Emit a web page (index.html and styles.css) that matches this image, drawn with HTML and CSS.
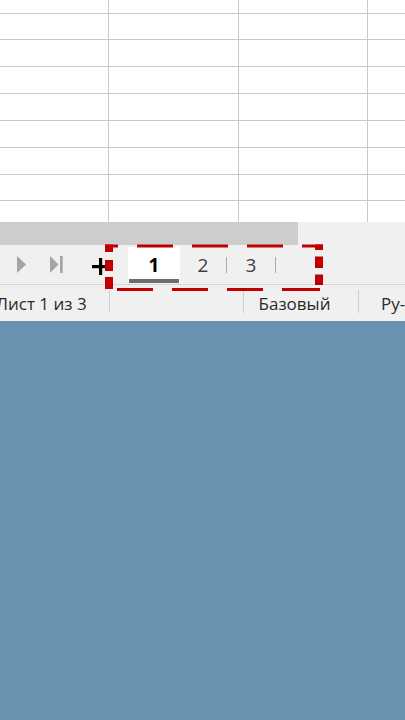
FILE: index.html
```html
<!DOCTYPE html>
<html lang="ru">
<head>
    <meta charset="UTF-8">
    <meta name="viewport" content="width=device-width, initial-scale=1.0">
    <title>Листы</title>
    <link rel="stylesheet" href="styles.css">
</head>
<body>
    <div class="window">
        <!-- Cells -->
        <div class="cells">
            <div></div><div></div><div></div><div></div>
            <div></div><div></div><div></div><div></div>
            <div></div><div></div><div></div><div></div>
            <div></div><div></div><div></div><div></div>
            <div></div><div></div><div></div><div></div>
            <div></div><div></div><div></div><div></div>
            <div></div><div></div><div></div><div></div>
            <div></div><div></div><div></div><div></div>
            <div></div><div></div><div></div><div></div>
        </div>

        <div class="hscroll"><div class="thumb"></div></div>

        <!-- Sheet tabs -->
        <div class="tabbar">
            <svg class="nav-next" width="9" height="17" viewBox="0 0 9 17">
                <polygon points="0,0 9,8.5 0,17"/>
            </svg>
            <svg class="nav-last" width="13" height="17" viewBox="0 0 13 17">
                <polygon points="0,0 8.5,8.5 0,17"/>
                <rect x="10" y="0" width="2.7" height="17"/>
            </svg>
            <svg class="add-sheet" width="17" height="17" viewBox="0 0 17 17">
                <rect x="7" y="0" width="3.2" height="17"/>
                <rect x="0" y="7" width="17" height="3.2"/>
            </svg>
            <div class="tabs">
                <div class="tab active">1</div>
                <div class="tab tab-2">2</div>
                <div class="tab-sep"></div>
                <div class="tab tab-3">3</div>
                <div class="tab-sep"></div>
            </div>
        </div>

        <!-- Status bar -->
        <div class="statusbar">
            <div class="status-cell sheet-count">Лист 1 из 3</div>
            <div class="status-sep"></div>
            <div class="status-cell empty"></div>
            <div class="status-sep"></div>
            <div class="status-cell page-style">Базовый</div>
            <div class="status-sep"></div>
            <div class="status-cell language">Ру-</div>
        </div>

        <!-- Red highlight round the tabs -->
        <svg class="highlight" width="405" height="330" viewBox="0 0 405 330">
            <rect x="105" y="244.5" width="13" height="3"/>
            <rect x="137" y="244.5" width="36" height="3"/>
            <rect x="192" y="244.5" width="36" height="3"/>
            <rect x="247" y="244.5" width="36" height="3"/>
            <rect x="302" y="244.5" width="21" height="3"/>

            <rect x="105" y="244.5" width="8" height="7.5"/>
            <rect x="105" y="260" width="8" height="11"/>
            <rect x="105" y="277" width="8" height="12"/>

            <rect x="315" y="244.5" width="8" height="5.5"/>
            <rect x="315" y="256.5" width="8" height="11.5"/>
            <rect x="315" y="274.5" width="8" height="10.5"/>

            <rect x="117" y="288" width="36" height="3"/>
            <rect x="172" y="288" width="36" height="3"/>
            <rect x="227" y="288" width="36" height="3"/>
            <rect x="282" y="288" width="38" height="3"/>
        </svg>
    </div>
</body>
</html>
```

FILE: styles.css
```css
/* General Styles */
body {
    margin: 0;
    padding: 0;
    background-color: #6992b1;
    font-family: "Open Sans", "Liberation Sans", sans-serif;
}

.window {
    position: relative;
    width: 405px;
    overflow: hidden;
}

/* Cells */
.cells {
    display: grid;
    grid-template-columns: 109px 129.5px 129.5px 1fr;
    grid-template-rows: 13.5px repeat(7, 26.85px) 1fr;
    height: 222px;
    background-color: #ffffff;
}

.cells div {
    border-right: 1px solid #c9c9c9;
    border-bottom: 1px solid #c9c9c9;
}

.cells div:nth-child(4n) {
    border-right: none;
}

.cells div:nth-last-child(-n+4) {
    border-bottom: none;
}

.hscroll {
    height: 23px;
    background-color: #f0f0f0;
}

.hscroll .thumb {
    width: 298px;
    height: 100%;
    background-color: #cdcdcd;
}

/* Sheet tabs */
.tabbar {
    display: flex;
    align-items: center;
    height: 39px;
    background-color: #f0f0f0;
    border-bottom: 1px solid #d6d6d6;
}

.tabbar svg {
    fill: #a4a4a4;
}

.nav-next {
    margin-left: 17px;
}

.nav-last {
    margin-left: 24px;
}

.add-sheet {
    margin-left: 29px;
    margin-top: 3px;
}

.tabbar .add-sheet {
    fill: #000000;
}

.tabs {
    display: flex;
    align-self: stretch;
    align-items: center;
    margin-left: 19px;
    padding: 2px 0 1px;
}

.tab {
    display: flex;
    align-items: center;
    justify-content: center;
    height: 100%;
    font-size: 19px;
    color: #404040;
}

.tab.active {
    position: relative;
    width: 52px;
    background-color: #ffffff;
    font-weight: 700;
    color: #000000;
}

.tab.active::after {
    content: "";
    position: absolute;
    left: 1px;
    right: 1px;
    bottom: 0;
    height: 4px;
    background-color: #6e6e6e;
}

.tab-2 {
    width: 46px;
}

.tab-3 {
    width: 48px;
}

.tab-sep {
    width: 1px;
    height: 16px;
    background-color: #a9a9a9;
}

/* Status bar */
.statusbar {
    display: flex;
    align-items: center;
    height: 36px;
    background-color: #f0f0f0;
    font-size: 17px;
    color: #2a2a2a;
    white-space: nowrap;
}

.status-cell {
    overflow: hidden;
}

.sheet-count {
    position: relative;
    width: 114px;
    margin-left: -4px;
    overflow: visible;
}

.sheet-count::after {
    content: "";
    position: absolute;
    left: 78px;
    bottom: -12px;
    width: 23px;
    height: 3px;
    background-color: #8c8c8c;
}

.empty {
    width: 133px;
}

.page-style {
    width: 100px;
    padding-left: 15px;
}

.language {
    padding-left: 22px;
}

.status-sep {
    align-self: flex-start;
    width: 1px;
    height: 23px;
    margin-top: 5px;
    background-color: #cfcfcf;
}

/* Highlight */
.highlight {
    position: absolute;
    left: 0;
    top: 0;
    fill: #c00000;
}
```
